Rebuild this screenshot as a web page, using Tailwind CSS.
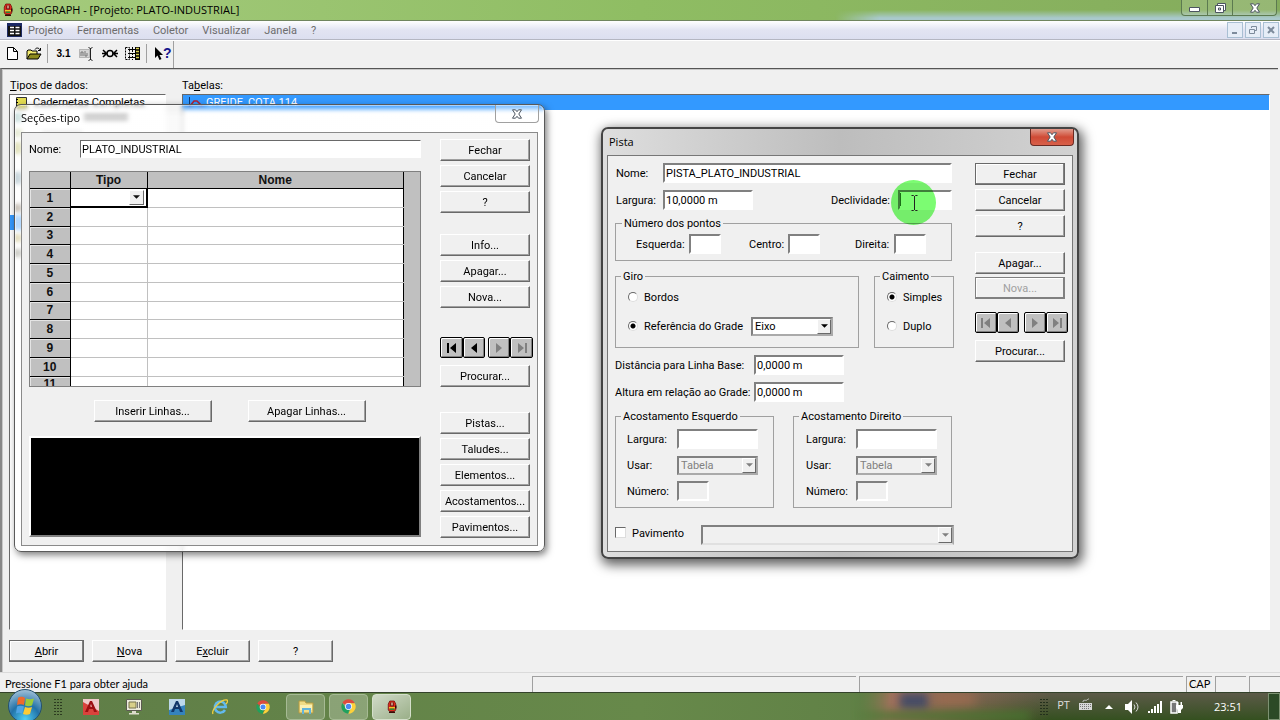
<!DOCTYPE html>
<html lang="pt-BR">
<head>
<meta charset="utf-8">
<script src="https://cdn.jsdelivr.net/npm/@tailwindcss/browser@4"></script>
<title>topoGRAPH - [Projeto: PLATO-INDUSTRIAL]</title>
</head>

<body class="relative flex h-screen flex-col overflow-hidden bg-[#f0f0f0] font-[Roboto,'Liberation_Sans',sans-serif] text-[11px] leading-[13px] text-black">

  <!-- shared shapes -->
  <svg class="hidden">
    <symbol id="topo" viewBox="0 0 16 18">
      <path d="M5 1h6l2 4v8l-2 2H5l-2-2V5z" fill="#e0291c" stroke="#6d120b"/>
      <path d="M6 3h4v5H6z" fill="#3a0a06"/><path d="M7 3h2v4H7z" fill="#f2b8a0"/>
      <path d="M4 10h8" stroke="#e8c92a" stroke-width="2"/><path d="M5 12h6" stroke="#2b8a34" stroke-width="2"/>
      <path d="M4 15h8v2H4zM12 7h2v4h-2z" fill="#3a0a06"/>
    </symbol>
    <symbol id="chrome" viewBox="0 0 20 20">
      <path d="M10 10L1.8 5.2A9.5 9.5 0 0 1 18.4 5.5H10z" fill="#dd4b3e"/>
      <path d="M18.4 5.5A9.5 9.5 0 0 1 9.6 19.5L14 12 12 5.5z" fill="#fdd13a"/>
      <path d="M9.6 19.5A9.5 9.5 0 0 1 1.8 5.2L6 12l5 2z" fill="#1fa15d"/>
      <circle cx="10" cy="10" r="4.6" fill="#fff"/><circle cx="10" cy="10" r="3.6" fill="#4a8af4"/>
    </symbol>
    <symbol id="down" viewBox="0 0 8 4"><path d="M0 0h8L4 4z" fill="currentColor"/></symbol>
    <symbol id="first" viewBox="0 0 12 10"><path d="M1 0h2v10H1zM10 0v10L4 5z" fill="currentColor"/></symbol>
    <symbol id="prev" viewBox="0 0 12 10"><path d="M9 0v10L3 5z" fill="currentColor"/></symbol>
    <symbol id="next" viewBox="0 0 12 10"><path d="M3 0v10l6-5z" fill="currentColor"/></symbol>
    <symbol id="last" viewBox="0 0 12 10"><path d="M9 0h2v10H9zM2 0v10l6-5z" fill="currentColor"/></symbol>
    <symbol id="close" viewBox="0 0 12 10"><path d="M1.500 .8h3L6 2.700 7.500.8h3L7.800 5l2.700 4.200h-3L6 7.300 4.500 9.200h-3L4.200 5z" fill="#fff" stroke="#4c5560"/></symbol>
  </svg>

  <!-- title bar -->
  <header class="relative flex h-5 shrink-0 items-center bg-linear-to-r from-[#a5cb7d] via-[#8fbd63] to-[#84ab5c] pl-[2px]">
    <div class="absolute right-0 bottom-0 h-[10px] w-[445px] bg-[#a9c9cc] mask-t-from-20% mask-l-from-90%"></div>
    <svg class="h-4 w-3"><use href="#topo"/></svg>
    <h1 class="ml-[6px] pb-px font-['Open_Sans',sans-serif] text-[11px]">topoGRAPH - [Projeto: PLATO-INDUSTRIAL]</h1>
    <div class="relative mr-[3px] ml-auto flex h-4 self-start overflow-hidden rounded-b border border-t-0 border-[#5c7a50] bg-white/15">
      <button class="flex w-[26px] items-center justify-center border-r border-[#5c7a50]" aria-label="Minimizar"><svg class="mt-1 h-[5px] w-3"><path d="M.5.5h10v4H.5z" fill="#fff" stroke="#4c5560"/></svg></button>
      <button class="flex w-[25px] items-center justify-center border-r border-[#5c7a50]" aria-label="Restaurar"><svg class="h-3 w-3" fill="#fff" stroke="#4c5560"><path d="M3.500 1.500h8v7h-8z"/><path d="M1.500 3.500h8v7h-8z"/><path d="M4.500 6h2v2h-2z"/></svg></button>
      <button class="flex w-[43px] items-center justify-center" aria-label="Fechar"><svg class="h-[10px] w-3"><use href="#close"/></svg></button>
    </div>
  </header>

  <!-- menu bar -->
  <nav class="flex h-5 shrink-0 items-center border-t border-b border-t-[#70855f] border-b-[#b4b6c2] bg-linear-to-b from-white via-[#e2e4f2] to-[#dcdff0] pl-[7px] text-[#6d6d6d]">
    <svg class="h-[14px] w-[15px]" viewBox="0 0 15 14"><path d="M0 0h15v14H0z" fill="#1d2a63"/><path d="M1 3h13v10H1z" fill="#111"/><path d="M3 4.500h4M3 7.500h4M3 10.500h4M8.500 4.500h4M8.500 7.500h4M8.500 10.500h4" stroke="#fff" stroke-width="1.500"/></svg>
    <ul class="ml-[6px] flex gap-[14px]">
      <li><a href="#">Projeto</a></li>
      <li><a href="#">Ferramentas</a></li>
      <li><a href="#">Coletor</a></li>
      <li><a href="#">Visualizar</a></li>
      <li><a href="#">Janela</a></li>
      <li><a href="#">?</a></li>
    </ul>
    <div class="ml-auto flex gap-[2px] pr-px">
      <button class="flex h-4 w-4 items-center justify-center border border-[#a9bfd3] bg-[#e6edf7]" aria-label="Minimizar"><svg class="h-2 w-2"><path d="M1 7h5" stroke="#7d8b9c" stroke-width="2"/></svg></button>
      <button class="flex h-4 w-4 items-center justify-center border border-[#a9bfd3] bg-[#e6edf7]" aria-label="Restaurar"><svg class="h-2 w-2" fill="none" stroke="#7d8b9c"><path d="M2.500 2V.5h5v4H6M.5 3.500h5v4h-5z"/></svg></button>
      <button class="flex h-4 w-4 items-center justify-center border border-[#a9bfd3] bg-[#e6edf7]" aria-label="Fechar"><svg class="h-2 w-2"><path d="M1 1l6 6M7 1L1 7" stroke="#7d8b9c" stroke-width="2"/></svg></button>
    </div>
  </nav>

  <!-- toolbar -->
  <div class="flex h-7 shrink-0 items-center border-t border-white">
    <div class="flex h-full w-[174px] items-center border-r border-[#a0a0a0] pb-[2px]">
      <button class="flex w-6 justify-center" aria-label="Novo"><svg class="h-[13px] w-[11px]" viewBox="0 0 11 13"><path d="M.5.5h6l4 4v8H.5zM6.500.5v4h4" fill="#fff" stroke="#000"/></svg></button>
      <button class="flex w-[19px] justify-center" aria-label="Abrir projeto"><svg class="h-[13px] w-4" viewBox="0 0 16 13"><path d="M1 12V4l1-1h3l1 1h5v3" fill="#f4ec70" stroke="#000"/><path d="M1 12l3-5h11l-3 5z" fill="#8c8a1e" stroke="#000"/><path d="M9 2.500c1-2 4-2 5 .5M14.500 1v2.500H12" fill="none" stroke="#000"/></svg></button>
      <span class="mx-1 h-[19px] border-l border-[#a0a0a0]"></span>
      <button class="w-[23px] text-center font-['Liberation_Sans',sans-serif] text-[10px] font-bold">3.1</button>
      <button class="flex w-[23px] justify-center" aria-label="Editar texto"><svg class="h-[14px] w-[15px]" viewBox="0 0 15 14"><path d="M.5 2.500h10v8H.5z" fill="#d5d5d5" stroke="#888" stroke-dasharray="1 1"/><path d="M2 9V5h2v4M6 4v5h2V6" fill="none" stroke="#777"/><path d="M9.500.5l2 1 2-1M11.500 1v12M9.500 13.500l2-1 2 1" fill="none" stroke="#222"/></svg></button>
      <button class="flex w-[23px] justify-center" aria-label="Ligar"><svg class="h-[9px] w-4" viewBox="0 0 16 9" fill="none" stroke="#000" stroke-width="1.500"><path d="M0 4.500h4M12 4.500h4M1 1l3.500 3.500L1 8M15 1l-3.500 3.500L15 8"/><circle cx="8" cy="4.500" r="3"/></svg></button>
      <button class="flex w-[22px] justify-center" aria-label="Tabela"><svg class="h-[13px] w-[15px]" viewBox="0 0 15 13"><path d="M.5.5h4v12h-4z" fill="none" stroke="#000" stroke-dasharray="2 1"/><path d="M7.500 0v13" stroke="#000" stroke-dasharray="2 1"/><path d="M3 2.500h7M3 6.500h7M3 10.500h7" stroke="#000"/><path d="M10 0h5v13h-5z"/><path d="M11 1.500h3M11 4.500h3M11 7.500h3M11 10.500h3" stroke="#d8cf50" stroke-width="1.500"/></svg></button>
      <span class="ml-[3px] h-[19px] border-l border-[#a0a0a0]"></span>
      <button class="ml-2 flex items-center" aria-label="Ajuda"><svg class="h-[13px] w-2" viewBox="0 0 8 13"><path d="M0 0v11l2.500-2.500L4.500 13l2-1-2-4H8z"/></svg><span class="font-['Liberation_Sans',sans-serif] text-[14px] font-bold text-[#15158c]">?</span></button>
    </div>
  </div>

  <!-- project window -->
  <main class="mr-[2px] flex min-h-0 flex-1 flex-col border-t border-l-2 border-t-[#555] border-l-[#888] pt-[10px] pr-2 pb-[10px] pl-[7px] shadow-[inset_1px_1px_#c8c8c8]">
    <div class="flex min-h-0 flex-1 gap-4">
      <section class="flex w-[157px] flex-col">
        <h2 class="mb-[2px] pl-px"><u>T</u>ipos de dados:</h2>
        <ul class="flex-1 overflow-hidden border border-t-[#696969] border-r-white border-b-white border-l-[#696969] bg-white">
          <li class="flex h-[15px] items-center gap-[6px] pl-[6px]"><svg class="h-3 w-[11px]" viewBox="0 0 11 12"><path d="M.5 .5h10v11H.5z" fill="#e3dc52" stroke="#333"/><path d="M0 2.500h2M0 5.500h2M0 8.500h2" stroke="#000"/></svg>Cadernetas Completas</li>
          <li class="flex h-[15px] items-center gap-[62px] pl-1"><span class="h-2 w-2 bg-[#78aea9]"></span><span class="h-[7px] w-11 bg-[#777]"></span></li>
          <li class="flex h-[15px] items-center gap-5 pl-1"><span class="h-2 w-2 bg-[#bcc78c]"></span><span class="h-[3px] w-10 bg-[#bbb]"></span></li>
          <li class="flex h-[15px] items-center pl-1"><span class="h-3 w-2 bg-[#b4b44e]"></span></li>
          <li class="h-[15px]"></li>
          <li class="flex h-[15px] items-center pl-1"><span class="h-3 w-2 bg-[#6a8fa0]"></span></li>
          <li class="h-[15px]"></li>
          <li class="flex h-[15px] items-center pl-1"><span class="h-2 w-2 bg-[#6b5840]"></span></li>
          <li class="h-[15px] bg-[#3399ff]"></li>
          <li class="flex h-[15px] items-center pl-1"><span class="h-2 w-2 bg-[#b4a44e]"></span></li>
          <li class="flex h-[15px] items-center pl-1"><span class="h-2 w-2 bg-[#776]"></span></li>
        </ul>
      </section>
      <section class="flex flex-1 flex-col">
        <h2 class="mb-[2px]">Ta<u>b</u>elas:</h2>
        <ul class="flex-1 border border-t-[#696969] border-r-white border-b-white border-l-[#696969] bg-white">
          <li class="flex h-[15px] items-center gap-[3px] bg-[#3399ff] pl-[6px] text-white"><svg class="h-3 w-[14px]" viewBox="0 0 14 12"><path d="M.5 0v10" stroke="#123a70"/><path d="M1 9l4-5h3l5 5" fill="none" stroke="#b02038" stroke-width="1.500"/></svg>GREIDE_COTA 114</li>
        </ul>
      </section>
    </div>
    <div class="mt-[10px] flex gap-2">
      <button class="h-[22px] w-[75px] border border-[#696969] bg-[#f0f0f0] shadow-[inset_-1px_-1px_#808080,inset_1px_1px_#fff]"><u>A</u>brir</button>
      <button class="h-[22px] w-[75px] border border-t-white border-r-[#696969] border-b-[#696969] border-l-white bg-[#f0f0f0] shadow-[inset_-1px_-1px_#a0a0a0]"><u>N</u>ova</button>
      <button class="h-[22px] w-[75px] border border-t-white border-r-[#696969] border-b-[#696969] border-l-white bg-[#f0f0f0] shadow-[inset_-1px_-1px_#a0a0a0]">E<u>x</u>cluir</button>
      <button class="h-[22px] w-[75px] border border-t-white border-r-[#696969] border-b-[#696969] border-l-white bg-[#f0f0f0] shadow-[inset_-1px_-1px_#a0a0a0]">?</button>
    </div>
  </main>

  <!-- status bar -->
  <div class="flex h-5 shrink-0 items-end gap-[3px] border-t border-[#dadada] pl-[5px] font-[Lato,sans-serif]">
    <p class="flex-[525] self-center pt-px">Pressione F1 para obter ajuda</p>
    <span class="h-4 flex-[324] border-t border-l border-[#a0a0a0]"></span>
    <span class="h-4 flex-[324] border-t border-l border-[#a0a0a0]"></span>
    <span class="h-4 w-[26px] border-t border-l border-[#a0a0a0] pl-[2px]">CAP</span>
    <span class="h-4 w-[31px] border-t border-l border-[#a0a0a0]"></span>
    <span class="h-4 w-[31px] border-t border-l border-[#a0a0a0]"></span>
  </div>

  <!-- taskbar -->
  <footer class="relative flex h-7 shrink-0 items-center border-t border-[#33422a] bg-linear-to-r from-[#5f7d47] via-[#67894a] to-[#55733f] font-['Open_Sans',sans-serif] text-white">
    <div class="absolute inset-y-0 right-0 w-[430px] overflow-hidden bg-linear-to-b from-[#5c5a48] to-[#34501f] mask-l-from-90%">
      <div class="absolute inset-y-0 left-0 w-[200px] bg-linear-105 from-[#587841] from-5% via-[#a0705c] via-20% to-transparent to-100%"></div>
      <div class="absolute top-0 left-[50px] h-4 w-7 bg-[#464c66] blur-[4px]"></div>
      <div class="absolute top-0 left-[85px] h-3 w-10 bg-[#9c6c50] blur-[6px]"></div>
      <div class="absolute bottom-0 left-0 h-2 w-[180px] bg-[#47762f] blur-[5px]"></div>
    </div>
    <button class="relative z-10 -mt-1 ml-2 h-[34px] w-[34px] shrink-0 self-start" aria-label="Iniciar">
      <svg viewBox="0 0 34 34"><defs><radialGradient id="orb" cx=".5" cy=".9" r=".9"><stop offset="0" stop-color="#4fd0f4"/><stop offset=".5" stop-color="#2272a8"/><stop offset="1" stop-color="#a4c2d8"/></radialGradient></defs><circle cx="17" cy="17" r="16.500" fill="url(#orb)" stroke="#24506e"/><path d="M10 9c3-2 5-1 7 0l-1 7c-2-1-5-1-7 0z" fill="#ef6a2c"/><path d="M18 9.500c3 1 5 1 8 0l-2 7c-2 1-5 1-7 0z" fill="#9bcb3b"/><path d="M9 17.500c2-1 5-1 7 0l-2 7c-2-1-4-1-6 0z" fill="#4fa4e4"/><path d="M17 18c2 1 5 1 7 0l-2 7c-2 1-5 1-7 0z" fill="#fccb35"/></svg>
    </button>
    <svg class="relative mr-[6px] ml-3 h-[18px] w-[9px] shrink-0"><path d="M1 1v18M4 1v18M7 1v18" stroke="#2c3b20" stroke-width="2" stroke-dasharray="1 2"/></svg>
    <a href="#" class="relative flex w-[43px] justify-center" aria-label="AutoCAD"><svg class="h-4 w-4" viewBox="0 0 16 16"><path d="M0 0h16v16H0z" fill="#efcaca"/><path d="M0 16V3L16 12v4z" fill="#d9433c"/><path d="M2 13L7 2h2l5 11h-3l-1-3H6l-1 3zM7 8h2L8 5z" fill="#9c0f12"/></svg></a>
    <a href="#" class="relative flex w-[43px] justify-center" aria-label="Monitor"><svg class="h-4 w-4" viewBox="0 0 16 16"><path d="M.5.5h15v11H.5z" fill="#ecebdc" stroke="#5b5b50"/><path d="M3 3h7v6H3z" fill="#d8d08a" stroke="#77754f"/><path d="M11.500 3v6M13.500 3v6" stroke="#777"/><path d="M6 12h4v2H6zM3 14h10v1.500H3z" fill="#dcdccc"/></svg></a>
    <a href="#" class="relative flex w-[43px] justify-center" aria-label="AutoCAD Civil"><svg class="h-4 w-4" viewBox="0 0 16 16"><path d="M0 0h16v16H0z" fill="#bcd7ea"/><path d="M0 16v-5l16-5v10z" fill="#3583bd"/><path d="M2 13L7 2h2l5 11h-3l-1-3H6l-1 3zM7 8h2L8 5z" fill="#12376a"/></svg></a>
    <a href="#" class="relative flex w-[43px] justify-center" aria-label="Internet Explorer"><svg class="h-4 w-4" viewBox="0 0 16 16"><path d="M13 11a5.500 5.500 0 1 1 .8-3H4" fill="none" stroke="#62b9ee" stroke-width="2.500"/><path d="M1 15C-1 11 9 0 15 1c1 1 0 3-1 4" fill="none" stroke="#f2d03e" stroke-width="1.300"/></svg></a>
    <a href="#" class="relative flex w-[43px] justify-center" aria-label="Chrome"><svg class="h-[14px] w-[14px]"><use href="#chrome"/></svg></a>
    <button class="relative mx-[2px] flex h-[26px] w-[39px] items-center justify-center rounded-sm border border-[#a6ba94] bg-white/20" aria-label="Explorer"><svg class="h-4 w-4" viewBox="0 0 16 16"><path d="M1 2h6l1 2h7v10H1z" fill="#f0dc86" stroke="#b59a40"/><path d="M2 6h12v5H2z" fill="#fbf0b4"/><path d="M4 15V9h9v6h-2v-4H6v4z" fill="#62b4dc"/></svg></button>
    <button class="relative mx-[2px] flex h-[26px] w-[39px] items-center justify-center rounded-sm border border-[#a6ba94] bg-white/25" aria-label="Chrome"><svg class="h-[15px] w-[15px]"><use href="#chrome"/></svg></button>
    <button class="relative mx-[2px] flex h-[26px] w-[39px] items-center justify-center rounded-sm border border-[#d4dfca] bg-linear-to-br from-white/70 to-white/35" aria-label="topoGRAPH"><svg class="h-4 w-3"><use href="#topo"/></svg></button>
    <div class="relative ml-auto flex h-full items-center">
      <svg class="h-[18px] w-[9px]"><path d="M1 1v18M4 1v18M7 1v18" stroke="#24301c" stroke-width="2" stroke-dasharray="1 2"/></svg>
      <span class="ml-2 -mt-1 text-[11px] text-[#dedede]">PT</span>
      <svg class="-mt-1 ml-2 h-[13px] w-[15px]" viewBox="0 0 15 13"><path d="M5 4c0-3 3-1 4-2s1-1 2-1" fill="none" stroke="#ccc"/><path d="M1 5h13v7H1z" fill="#d8d8d8"/><path d="M2 6.500h11M2 8.500h11M4 10.500h7" stroke="#777" stroke-dasharray="1 1"/></svg>
      <svg class="ml-3 h-[4px] w-2"><path d="M4 0l4 4H0z" fill="#fff"/></svg>
      <svg class="ml-3 h-[14px] w-[15px]" viewBox="0 0 15 14"><path d="M0 4h3l4-4v14l-4-4H0z" fill="#fff"/><path d="M9 4.500q2 2.500 0 5M11 2.500q4 4.500 0 9" fill="none" stroke="#ddd"/></svg>
      <svg class="ml-2 h-3 w-[14px]" viewBox="0 0 14 12"><path d="M0 10h2v2H0zM3 8h2v4H3zM6 5h2v7H6zM9 3h2v9H9zM12 0h2v12h-2z" fill="#fff"/></svg>
      <svg class="ml-2 h-[14px] w-[14px]" viewBox="0 0 14 14"><path d="M1 2h6v11H1z" fill="#777" stroke="#fff" stroke-width="1.500"/><path d="M2.500.5h3" stroke="#fff"/><path d="M6 5h7v3l-2 2v3H8v-3L6 8zM7 2h1.500v3H7zM10.500 2H12v3h-1.500z" fill="#fff"/></svg>
      <span class="ml-[30px] text-[11px]">23:51</span>
      <button class="ml-[26px] h-full w-3 border border-[#7d9272] bg-[#2c4a26]" aria-label="Mostrar área de trabalho"></button>
    </div>
  </footer>

  <!-- Seções-tipo dialog -->
  <div role="dialog" aria-label="Seções-tipo" class="absolute top-[104px] left-[14px] w-[531px] rounded-[7px] border border-[#5a5a5a] bg-linear-to-b from-white/10 via-white/65 via-[12px] to-white/65 px-[6px] pb-[5px] shadow-[inset_0_0_0_1px_#ffffff80,2px_3px_7px_#00000080] backdrop-blur-[2px]">
    <div class="flex h-[27px] items-center font-['Open_Sans',sans-serif] text-[11px]">
      <h2 class="pb-[2px]">Seções-tipo</h2>
      <button class="-mr-px ml-auto flex h-[18px] w-[44px] items-center justify-center self-start rounded-b border border-t-0 border-[#a0a0a0] bg-white/30" aria-label="Fechar"><svg class="h-[10px] w-3"><use href="#close"/></svg></button>
    </div>
    <div class="flex gap-[19px] border border-[#8a8a8a] bg-[#f0f0f0] pt-[6px] pb-[7px] pl-[7px]">
      <div class="w-[392px]">
        <div class="flex items-center pt-px">
          <label for="secao-nome" class="w-[51px]">Nome:</label>
          <input id="secao-nome" value="PLATO_INDUSTRIAL" class="h-[18px] min-w-0 flex-1 border border-t-[#696969] border-r-white border-b-white border-l-[#696969] bg-white pl-px">
        </div>
        <div class="mt-[13px] flex h-[216px] overflow-hidden border border-[#808080]">
          <table class="w-[374px] table-fixed self-start border-collapse bg-white font-['Liberation_Sans',sans-serif] text-[12px] leading-[14px] font-bold text-[#111]">
            <thead>
              <tr class="h-4 bg-[#c0c0c0]">
                <th class="w-10 border-r border-b border-black"></th>
                <th class="w-[77px] border-r border-b border-black">Tipo</th>
                <th class="border-r border-b border-black">Nome</th>
              </tr>
            </thead>
            <tbody class="[&>tr]:h-[19px] [&>tr:nth-child(4n+3)]:h-[18px]">
              <tr>
                <th class="border-r border-b border-black bg-[#c0c0c0] shadow-[inset_1px_1px_#e4e4e4]">1</th>
                <td class="border-r-2 border-b-2 border-black">
                  <div class="relative">
                    <select aria-label="Tipo" class="block h-[15px] w-full appearance-none bg-white"><option></option></select>
                    <span class="pointer-events-none absolute top-0 right-[2px] flex h-[15px] w-[15px] items-center justify-center border border-t-white border-r-[#696969] border-b-[#696969] border-l-white bg-[#f0f0f0]"><svg class="h-1 w-[7px]"><use href="#down"/></svg></span>
                  </div>
                </td>
                <td class="border-r border-b border-r-black border-b-[#c0c0c0]"></td>
              </tr>
              <tr><th class="border-r border-b border-black bg-[#c0c0c0] shadow-[inset_1px_1px_#e4e4e4]">2</th><td class="border-r border-b border-[#c0c0c0]"></td><td class="border-r border-b border-r-black border-b-[#c0c0c0]"></td></tr>
              <tr><th class="border-r border-b border-black bg-[#c0c0c0] shadow-[inset_1px_1px_#e4e4e4]">3</th><td class="border-r border-b border-[#c0c0c0]"></td><td class="border-r border-b border-r-black border-b-[#c0c0c0]"></td></tr>
              <tr><th class="border-r border-b border-black bg-[#c0c0c0] shadow-[inset_1px_1px_#e4e4e4]">4</th><td class="border-r border-b border-[#c0c0c0]"></td><td class="border-r border-b border-r-black border-b-[#c0c0c0]"></td></tr>
              <tr><th class="border-r border-b border-black bg-[#c0c0c0] shadow-[inset_1px_1px_#e4e4e4]">5</th><td class="border-r border-b border-[#c0c0c0]"></td><td class="border-r border-b border-r-black border-b-[#c0c0c0]"></td></tr>
              <tr><th class="border-r border-b border-black bg-[#c0c0c0] shadow-[inset_1px_1px_#e4e4e4]">6</th><td class="border-r border-b border-[#c0c0c0]"></td><td class="border-r border-b border-r-black border-b-[#c0c0c0]"></td></tr>
              <tr><th class="border-r border-b border-black bg-[#c0c0c0] shadow-[inset_1px_1px_#e4e4e4]">7</th><td class="border-r border-b border-[#c0c0c0]"></td><td class="border-r border-b border-r-black border-b-[#c0c0c0]"></td></tr>
              <tr><th class="border-r border-b border-black bg-[#c0c0c0] shadow-[inset_1px_1px_#e4e4e4]">8</th><td class="border-r border-b border-[#c0c0c0]"></td><td class="border-r border-b border-r-black border-b-[#c0c0c0]"></td></tr>
              <tr><th class="border-r border-b border-black bg-[#c0c0c0] shadow-[inset_1px_1px_#e4e4e4]">9</th><td class="border-r border-b border-[#c0c0c0]"></td><td class="border-r border-b border-r-black border-b-[#c0c0c0]"></td></tr>
              <tr><th class="border-r border-b border-black bg-[#c0c0c0] shadow-[inset_1px_1px_#e4e4e4]">10</th><td class="border-r border-b border-[#c0c0c0]"></td><td class="border-r border-b border-r-black border-b-[#c0c0c0]"></td></tr>
              <tr><th class="border-r border-b border-black bg-[#c0c0c0] align-top shadow-[inset_1px_1px_#e4e4e4]">11</th><td class="border-r border-b border-[#c0c0c0]"></td><td class="border-r border-b border-r-black border-b-[#c0c0c0]"></td></tr>
            </tbody>
          </table>
          <div class="flex-1 bg-[#c0c0c0]"></div>
        </div>
        <div class="mt-[13px] flex justify-center gap-9 pl-[9px]">
          <button class="h-[22px] w-[118px] border border-t-white border-r-[#696969] border-b-[#696969] border-l-white bg-[#f0f0f0] shadow-[inset_-1px_-1px_#a0a0a0]">Inserir Linhas...</button>
          <button class="h-[22px] w-[118px] border border-t-white border-r-[#696969] border-b-[#696969] border-l-white bg-[#f0f0f0] shadow-[inset_-1px_-1px_#a0a0a0]">Apagar Linhas...</button>
        </div>
        <div class="mt-[14px] h-[101px] border-2 border-t-white border-r-[#808080] border-b-[#808080] border-l-white bg-black"></div>
      </div>
      <div class="flex w-[90px] flex-col gap-1">
        <button class="h-[22px] border border-t-white border-r-[#696969] border-b-[#696969] border-l-white shadow-[inset_-1px_-1px_#a0a0a0]">Fechar</button>
        <button class="h-[22px] border border-t-white border-r-[#696969] border-b-[#696969] border-l-white shadow-[inset_-1px_-1px_#a0a0a0]">Cancelar</button>
        <button class="h-[22px] border border-t-white border-r-[#696969] border-b-[#696969] border-l-white shadow-[inset_-1px_-1px_#a0a0a0]">?</button>
        <button class="mt-[17px] h-[22px] border border-t-white border-r-[#696969] border-b-[#696969] border-l-white shadow-[inset_-1px_-1px_#a0a0a0]">Info...</button>
        <button class="h-[22px] border border-t-white border-r-[#696969] border-b-[#696969] border-l-white shadow-[inset_-1px_-1px_#a0a0a0]">Apagar...</button>
        <button class="h-[22px] border border-t-white border-r-[#696969] border-b-[#696969] border-l-white shadow-[inset_-1px_-1px_#a0a0a0]">Nova...</button>
        <div class="mt-[25px] flex h-[21px] w-[93px] justify-between">
          <div class="flex">
            <button class="flex w-[23px] items-center justify-center rounded-[2px] border border-black bg-[#c0c0c0] shadow-[inset_1px_1px_#fff,inset_-1px_-1px_#808080]" aria-label="Primeiro"><svg class="h-[10px] w-3"><use href="#first"/></svg></button>
            <button class="flex w-[22px] items-center justify-center rounded-[2px] border border-black bg-[#c0c0c0] shadow-[inset_1px_1px_#fff,inset_-1px_-1px_#808080]" aria-label="Anterior"><svg class="h-[10px] w-3"><use href="#prev"/></svg></button>
          </div>
          <div class="flex text-[#808080]">
            <button disabled class="flex w-[22px] items-center justify-center rounded-[2px] border border-black bg-[#c0c0c0] shadow-[inset_1px_1px_#fff,inset_-1px_-1px_#808080]" aria-label="Próximo"><svg class="h-[10px] w-3"><use href="#next"/></svg></button>
            <button disabled class="flex w-[23px] items-center justify-center rounded-[2px] border border-black bg-[#c0c0c0] shadow-[inset_1px_1px_#fff,inset_-1px_-1px_#808080]" aria-label="Último"><svg class="h-[10px] w-3"><use href="#last"/></svg></button>
          </div>
        </div>
        <button class="mt-[3px] h-[22px] border border-t-white border-r-[#696969] border-b-[#696969] border-l-white shadow-[inset_-1px_-1px_#a0a0a0]">Procurar...</button>
        <button class="mt-[21px] h-[22px] border border-t-white border-r-[#696969] border-b-[#696969] border-l-white shadow-[inset_-1px_-1px_#a0a0a0]">Pistas...</button>
        <button class="h-[22px] border border-t-white border-r-[#696969] border-b-[#696969] border-l-white shadow-[inset_-1px_-1px_#a0a0a0]">Taludes...</button>
        <button class="h-[22px] border border-t-white border-r-[#696969] border-b-[#696969] border-l-white shadow-[inset_-1px_-1px_#a0a0a0]">Elementos...</button>
        <button class="h-[22px] border border-t-white border-r-[#696969] border-b-[#696969] border-l-white shadow-[inset_-1px_-1px_#a0a0a0]">Acostamentos...</button>
        <button class="h-[22px] border border-t-white border-r-[#696969] border-b-[#696969] border-l-white shadow-[inset_-1px_-1px_#a0a0a0]">Pavimentos...</button>
      </div>
    </div>
  </div>

  <!-- Pista dialog -->
  <div role="dialog" aria-label="Pista" class="absolute top-[127px] left-[601px] w-[478px] rounded-[7px] border-2 border-[#444] bg-linear-to-r from-[#dedede] via-[#bdbdbd] to-[#d2d2d2] px-1 pb-[5px] shadow-[2px_4px_12px_2px_#000000a0]">
    <div class="flex h-[26px] items-center pl-[2px] font-['Open_Sans',sans-serif] text-[11px]">
      <h2 class="pb-[2px]">Pista</h2>
      <button class="-mr-px ml-auto flex h-[17px] w-[44px] items-center justify-center self-start rounded-b border border-t-0 border-[#6b2a22] bg-linear-to-b from-[#e09a8c] via-[#cf4a35] to-[#d8604a]" aria-label="Fechar"><svg class="h-[10px] w-3"><use href="#close"/></svg></button>
    </div>
    <div class="flex gap-[23px] border border-[#777] bg-[#f0f0f0] pt-[7px] pb-[6px] pl-[7px]">
      <form class="w-[337px]">
        <div class="flex items-center">
          <label for="pista-nome" class="w-12 pl-px">Nome:</label>
          <input id="pista-nome" value="PISTA_PLATO_INDUSTRIAL" class="h-5 min-w-0 flex-1 border-2 border-t-[#808080] border-r-white border-b-white border-l-[#808080] bg-white pl-px">
        </div>
        <div class="mt-[7px] flex items-center">
          <label for="pista-largura" class="w-12 pl-px">Largura:</label>
          <input id="pista-largura" value="10,0000 m" class="h-5 w-[90px] border-2 border-t-[#808080] border-r-white border-b-white border-l-[#808080] bg-white pl-px">
          <label for="declividade" class="mr-2 ml-auto">Declividade:</label>
          <input id="declividade" class="h-5 w-[54px] border-2 border-t-[#808080] border-r-white border-b-white border-l-[#808080] bg-white pl-px">
        </div>
        <fieldset class="mt-[7px] flex border border-[#a0a0a0] pt-1 pb-[6px] pl-5">
          <legend class="-ml-[14px] px-[2px]">Número dos pontos</legend>
          <div class="flex items-center"><label for="esquerda" class="w-[53px]">Esquerda:</label><input id="esquerda" class="h-5 w-8 border-2 border-t-[#808080] border-r-white border-b-white border-l-[#808080] bg-white"></div>
          <div class="ml-7 flex items-center"><label for="centro" class="w-[39px]">Centro:</label><input id="centro" class="h-5 w-8 border-2 border-t-[#808080] border-r-white border-b-white border-l-[#808080] bg-white"></div>
          <div class="ml-[35px] flex items-center"><label for="direita" class="w-[39px]">Direita:</label><input id="direita" class="h-5 w-8 border-2 border-t-[#808080] border-r-white border-b-white border-l-[#808080] bg-white"></div>
        </fieldset>
        <div class="mt-[9px] -mr-[2px] flex justify-between">
          <fieldset class="w-[244px] border border-[#a0a0a0] pt-1 pb-[11px] pl-3">
            <legend class="-ml-[7px] px-[2px]">Giro</legend>
            <div class="flex h-5 items-center gap-[6px]">
              <input type="radio" id="bordos" name="giro" class="h-[10px] w-[10px] appearance-none rounded-full border border-t-[#696969] border-r-[#ddd] border-b-[#ddd] border-l-[#696969] bg-white checked:bg-[radial-gradient(circle,#000_2px,#fff_3px)]">
              <label for="bordos">Bordos</label>
            </div>
            <div class="mt-[9px] flex h-5 items-center gap-[6px]">
              <input type="radio" id="grade" name="giro" checked class="h-[10px] w-[10px] appearance-none rounded-full border border-t-[#696969] border-r-[#ddd] border-b-[#ddd] border-l-[#696969] bg-white checked:bg-[radial-gradient(circle,#000_2px,#fff_3px)]">
              <label for="grade" class="w-[101px]">Referência do Grade</label>
              <div class="relative">
                <select aria-label="Referência" class="block h-[19px] w-[82px] appearance-none border-2 border-t-[#808080] border-r-[#aaa] border-b-[#aaa] border-l-[#808080] bg-white pl-[2px]"><option>Eixo</option></select>
                <span class="pointer-events-none absolute top-[2px] right-[2px] flex h-[15px] w-[14px] items-center justify-center border border-t-white border-r-[#696969] border-b-[#696969] border-l-white bg-[#f0f0f0]"><svg class="h-1 w-[7px]"><use href="#down"/></svg></span>
              </div>
            </div>
          </fieldset>
          <fieldset class="w-20 border border-[#a0a0a0] pt-1 pb-[11px] pl-3">
            <legend class="-ml-[7px] px-[2px]">Caimento</legend>
            <div class="flex h-5 items-center gap-[6px]">
              <input type="radio" id="simples" name="caimento" checked class="h-[10px] w-[10px] appearance-none rounded-full border border-t-[#696969] border-r-[#ddd] border-b-[#ddd] border-l-[#696969] bg-white checked:bg-[radial-gradient(circle,#000_2px,#fff_3px)]">
              <label for="simples">Simples</label>
            </div>
            <div class="mt-[9px] flex h-5 items-center gap-[6px]">
              <input type="radio" id="duplo" name="caimento" class="h-[10px] w-[10px] appearance-none rounded-full border border-t-[#696969] border-r-[#ddd] border-b-[#ddd] border-l-[#696969] bg-white checked:bg-[radial-gradient(circle,#000_2px,#fff_3px)]">
              <label for="duplo">Duplo</label>
            </div>
          </fieldset>
        </div>
        <div class="mt-[7px] flex items-center">
          <label for="distancia" class="w-[139px]">Distância para Linha Base:</label>
          <input id="distancia" value="0,0000 m" class="h-5 w-[90px] border-2 border-t-[#808080] border-r-white border-b-white border-l-[#808080] bg-white pl-px">
        </div>
        <div class="mt-[7px] flex items-center">
          <label for="altura" class="w-[139px]">Altura em relação ao Grade:</label>
          <input id="altura" value="0,0000 m" class="h-5 w-[90px] border-2 border-t-[#808080] border-r-white border-b-white border-l-[#808080] bg-white pl-px">
        </div>
        <div class="mt-2 flex justify-between">
          <fieldset class="w-[159px] border border-[#a0a0a0] pt-[6px] pb-[6px] pl-[11px]">
            <legend class="-ml-[6px] px-[2px]">Acostamento Esquerdo</legend>
            <div class="flex flex-col gap-[6px]">
              <div class="flex h-5 items-center"><label for="esq-largura" class="w-[50px]">Largura:</label><input id="esq-largura" class="h-5 w-[81px] border-2 border-t-[#808080] border-r-white border-b-white border-l-[#808080] bg-white"></div>
              <div class="flex h-5 items-center"><label for="esq-usar" class="w-[50px]">Usar:</label>
                <div class="relative">
                  <select id="esq-usar" disabled class="block h-[19px] w-[81px] appearance-none border-2 border-t-[#808080] border-r-[#aaa] border-b-[#aaa] border-l-[#808080] bg-[#f0f0f0] pl-[2px] text-[#808080] opacity-100"><option>Tabela</option></select>
                  <span class="pointer-events-none absolute top-[2px] right-[2px] flex h-[15px] w-[14px] items-center justify-center border border-t-white border-r-[#696969] border-b-[#696969] border-l-white bg-[#f0f0f0] text-[#808080]"><svg class="h-1 w-[7px]"><use href="#down"/></svg></span>
                </div>
              </div>
              <div class="flex h-5 items-center"><label for="esq-numero" class="w-[50px]">Número:</label><input id="esq-numero" disabled class="h-5 w-8 border-2 border-t-[#808080] border-r-white border-b-white border-l-[#808080] bg-[#f0f0f0]"></div>
            </div>
          </fieldset>
          <fieldset class="w-[159px] border border-[#a0a0a0] pt-[6px] pb-[6px] pl-3">
            <legend class="-ml-[7px] px-[2px]">Acostamento Direito</legend>
            <div class="flex flex-col gap-[6px]">
              <div class="flex h-5 items-center"><label for="dir-largura" class="w-[50px]">Largura:</label><input id="dir-largura" class="h-5 w-[81px] border-2 border-t-[#808080] border-r-white border-b-white border-l-[#808080] bg-white"></div>
              <div class="flex h-5 items-center"><label for="dir-usar" class="w-[50px]">Usar:</label>
                <div class="relative">
                  <select id="dir-usar" disabled class="block h-[19px] w-[81px] appearance-none border-2 border-t-[#808080] border-r-[#aaa] border-b-[#aaa] border-l-[#808080] bg-[#f0f0f0] pl-[2px] text-[#808080] opacity-100"><option>Tabela</option></select>
                  <span class="pointer-events-none absolute top-[2px] right-[2px] flex h-[15px] w-[14px] items-center justify-center border border-t-white border-r-[#696969] border-b-[#696969] border-l-white bg-[#f0f0f0] text-[#808080]"><svg class="h-1 w-[7px]"><use href="#down"/></svg></span>
                </div>
              </div>
              <div class="flex h-5 items-center"><label for="dir-numero" class="w-[50px]">Número:</label><input id="dir-numero" disabled class="h-5 w-8 border-2 border-t-[#808080] border-r-white border-b-white border-l-[#808080] bg-[#f0f0f0]"></div>
            </div>
          </fieldset>
        </div>
        <div class="mt-[17px] -mr-[2px] flex items-start">
          <input type="checkbox" id="pavimento" class="mt-[2px] h-[11px] w-[11px] appearance-none border border-t-[#696969] border-r-[#ddd] border-b-[#ddd] border-l-[#696969] bg-white">
          <label for="pavimento" class="mt-[2px] ml-[6px] w-[69px]">Pavimento</label>
          <div class="relative flex-1">
            <select aria-label="Tipo de pavimento" disabled class="block h-5 w-full appearance-none border-2 border-t-[#808080] border-r-[#aaa] border-b-[#e0e0e0] border-l-[#808080] bg-[#f0f0f0] opacity-100"><option></option></select>
            <span class="pointer-events-none absolute top-[2px] right-[2px] flex h-[16px] w-[14px] items-center justify-center border border-t-white border-r-[#696969] border-b-[#696969] border-l-white bg-[#f0f0f0] text-[#808080]"><svg class="h-1 w-[7px]"><use href="#down"/></svg></span>
          </div>
        </div>
      </form>
      <div class="flex w-[90px] flex-col gap-1">
        <button class="h-[22px] border border-[#696969] shadow-[inset_-1px_-1px_#808080,inset_1px_1px_#fff]">Fechar</button>
        <button class="h-[22px] border border-t-white border-r-[#696969] border-b-[#696969] border-l-white shadow-[inset_-1px_-1px_#a0a0a0]">Cancelar</button>
        <button class="h-[22px] border border-t-white border-r-[#696969] border-b-[#696969] border-l-white shadow-[inset_-1px_-1px_#a0a0a0]">?</button>
        <button class="mt-[11px] h-[22px] border border-t-white border-r-[#696969] border-b-[#696969] border-l-white shadow-[inset_-1px_-1px_#a0a0a0]">Apagar...</button>
        <button disabled class="-mt-px h-[22px] border border-[#808080] text-[#a0a0a0] shadow-[inset_-1px_-1px_#808080,inset_1px_1px_#fff]">Nova...</button>
        <div class="mt-[9px] flex h-[21px] w-[93px] justify-between text-[#808080]">
          <div class="flex">
            <button disabled class="flex w-[22px] items-center justify-center rounded-[2px] border border-black bg-[#c0c0c0] shadow-[inset_1px_1px_#fff,inset_-1px_-1px_#808080]" aria-label="Primeiro"><svg class="h-[10px] w-3"><use href="#first"/></svg></button>
            <button disabled class="flex w-[22px] items-center justify-center rounded-[2px] border border-black bg-[#c0c0c0] shadow-[inset_1px_1px_#fff,inset_-1px_-1px_#808080]" aria-label="Anterior"><svg class="h-[10px] w-3"><use href="#prev"/></svg></button>
          </div>
          <div class="flex">
            <button disabled class="flex w-[22px] items-center justify-center rounded-[2px] border border-black bg-[#c0c0c0] shadow-[inset_1px_1px_#fff,inset_-1px_-1px_#808080]" aria-label="Próximo"><svg class="h-[10px] w-3"><use href="#next"/></svg></button>
            <button disabled class="flex w-[22px] items-center justify-center rounded-[2px] border border-black bg-[#c0c0c0] shadow-[inset_1px_1px_#fff,inset_-1px_-1px_#808080]" aria-label="Último"><svg class="h-[10px] w-3"><use href="#last"/></svg></button>
          </div>
        </div>
        <button class="mt-[3px] h-[22px] border border-t-white border-r-[#696969] border-b-[#696969] border-l-white shadow-[inset_-1px_-1px_#a0a0a0]">Procurar...</button>
      </div>
    </div>
  </div>

  <!-- mouse pointer with highlight -->
  <div class="pointer-events-none absolute top-[180px] left-[891px] h-[45px] w-[45px] rounded-full bg-[#7cfc72] mix-blend-multiply"></div>
  <svg class="pointer-events-none absolute top-[195px] left-[911px] h-4 w-[7px]" fill="none" stroke="#222"><path d="M.5.5h2l1 1 1-1h2M3.500 1v14M.5 15.500h2l1-1 1 1h2"/></svg>
  <div class="pointer-events-none absolute top-[193px] left-[900px] h-[13px] w-px bg-[#1c6e18]"></div>
</body>
</html>
